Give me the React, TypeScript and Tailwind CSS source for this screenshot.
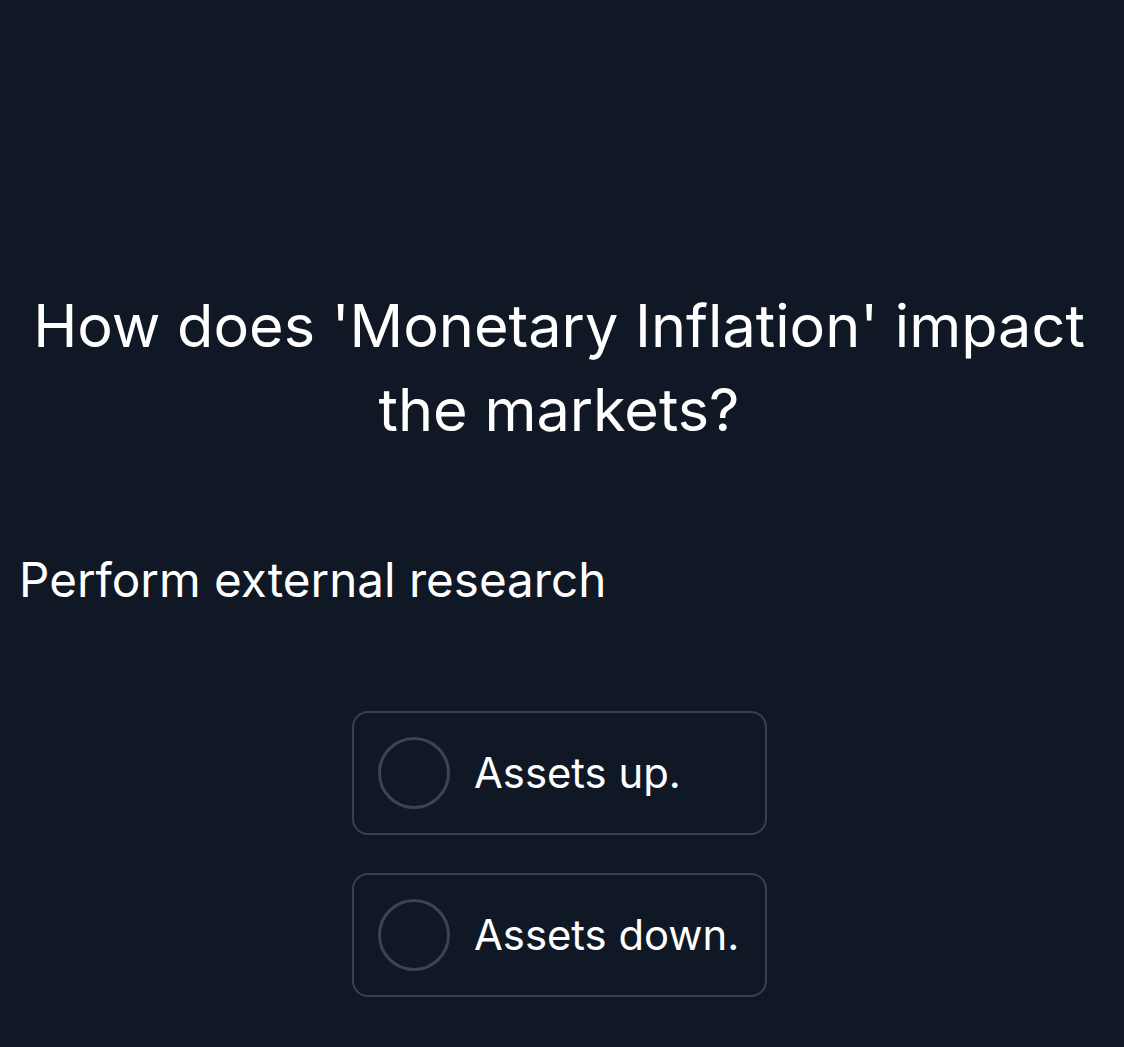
const options = ["Assets up.", "Assets down."];

export default function App() {
  return (
    <div className="min-h-[1047px] bg-[#0f1824] text-white font-['Inter','Noto_Sans',sans-serif]">
      <div className="pt-[283px]">
        <h1 className="text-center text-[59.4px] leading-[84px] font-normal pr-[6px]">
          How does 'Monetary Inflation' impact
          <br />
          the markets?
        </h1>
        <p className="mt-[93px] pl-[19px] text-[47.6px] leading-[72px]">Perform external research</p>
        <div className="mt-[95px] flex flex-col items-center gap-[38px] pr-[5px]">
          {options.map((o) => (
            <button
              key={o}
              className="w-[415px] h-[124px] flex items-center gap-[24px] px-6 border-2 border-[#374151] rounded-2xl text-left"
            >
              <span className="w-[72px] h-[72px] rounded-full border-[3px] border-[#3b4552] shrink-0" />
              <span className="text-[41.8px] leading-none whitespace-nowrap pt-[2px]">{o}</span>
            </button>
          ))}
        </div>
      </div>
    </div>
  );
}
